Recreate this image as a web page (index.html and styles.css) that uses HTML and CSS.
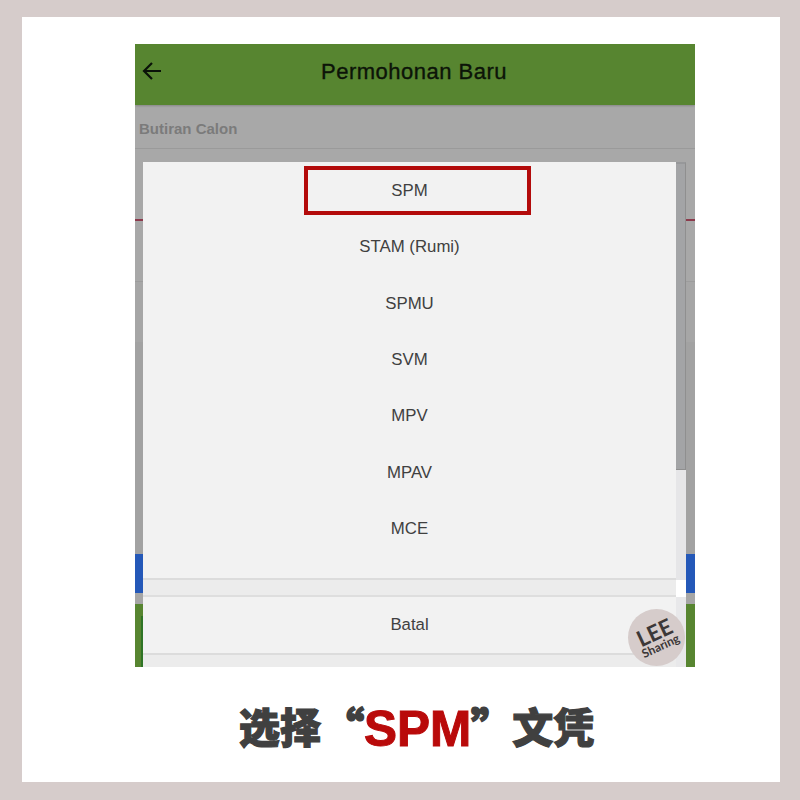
FILE: index.html
```html
<!DOCTYPE html>
<html lang="ms">
<head>
<meta charset="utf-8">
<title>Permohonan Baru</title>
<link rel="stylesheet" href="styles.css">
</head>
<body>
<main class="card">
  <section class="phone">
    <header class="appbar">
      <svg class="back" viewBox="0 0 20 20" width="20" height="20" aria-hidden="true"><path d="M19 10H2M10 2L2 10l8 8" fill="none" stroke="#0a1208" stroke-width="2.2"/></svg>
      <h1 class="apptitle">Permohonan Baru</h1>
    </header>
    <div class="section-head">Butiran Calon</div>
    <div class="under under-a"></div>
    <div class="under under-b"></div>
    <div class="under under-c"></div>
    <div class="under under-d"></div>
    <div class="under-blue"></div>
    <div class="under-gap"></div>
    <div class="under-green"></div>

    <div class="sheet">
      <div class="sheet-main">
        <ul class="options">
          <li class="option option-selected">SPM</li>
          <li class="option">STAM (Rumi)</li>
          <li class="option">SPMU</li>
          <li class="option">SVM</li>
          <li class="option">MPV</li>
          <li class="option">MPAV</li>
          <li class="option">MCE</li>
        </ul>
        <div class="strip"></div>
        <div class="cancel">Batal</div>
        <div class="strip strip-end"></div>
      </div>
      <div class="scrollbar">
        <div class="thumb"></div>
        <div class="track"></div>
        <div class="track-end"></div>
      </div>
    </div>

    <div class="badge">
      <div class="badge-text">
        <span class="badge-lee">LEE</span>
        <span class="badge-sharing">Sharing</span>
      </div>
    </div>
  </section>
  <p class="caption"><span>选择</span><span class="quote quote-l">“</span><span class="spm">SPM</span><span class="quote quote-r">”</span><span>文凭</span></p>
</main>
</body>
</html>
```
FILE: styles.css
```css
* { box-sizing: border-box; }
html, body { margin: 0; padding: 0; }
body {
  width: 800px;
  height: 800px;
  background: #d6cccb;
  padding: 17px 20px 18px 22px;
  font-family: "Liberation Sans", Arial, sans-serif;
  overflow: hidden;
}
.card {
  width: 758px;
  height: 765px;
  background: #fff;
  padding: 27px 85px 0 113px;
  display: flex;
  flex-direction: column;
}
.phone {
  position: relative;
  width: 560px;
  height: 623px;
  overflow: hidden;
  flex: none;
  background: #a3a3a3;
}
.appbar {
  height: 61px;
  background: #578530;
  display: flex;
  align-items: center;
  padding: 0 0 6px 7px;
  box-shadow: 0 1px 2px rgba(0,0,0,.2);
  position: relative;
}
.back { flex: none; margin-top: -2px; }
.apptitle {
  margin: 0 0 0 159px;
  font-size: 22px;
  font-weight: 400;
  letter-spacing: .5px;
  color: #0c1408;
  -webkit-text-stroke: .35px #0c1408;
  white-space: nowrap;
}
.section-head {
  height: 44px;
  background: #a8a8a8;
  border-bottom: 1px solid #9a9a9a;
  padding: 16px 0 0 4px;
  font-size: 15px;
  line-height: 16px;
  font-weight: 700;
  color: #7b7b7b;
}
.under { background: #a8a8a8; }
.under-a { height: 72px; border-bottom: 2px solid #8c3a4c; }
.under-b { height: 61px; border-bottom: 1px solid #9c9c9c; }
.under-c { height: 60px; background: #a6a6a6; }
.under-d { height: 212px; background: #a2a2a2; }
.under-blue { height: 39px; background: #2458b8; }
.under-gap { height: 11px; background: #a6a6a6; }
.under-green {
  height: 64px;
  background: #578530;
  position: relative;
}
.under-green::before {
  content: "";
  position: absolute;
  left: 6px;
  top: 12px;
  bottom: 0;
  width: 2px;
  background: #2f7426;
}

.sheet {
  position: absolute;
  left: 8px;
  top: 118px;
  width: 543px;
  bottom: 0;
  display: flex;
}
.sheet-main {
  width: 533px;
  flex: none;
  display: flex;
  flex-direction: column;
  background: #f2f2f2;
}
.options {
  list-style: none;
  margin: 0;
  padding: 1px 0 0;
  height: 418px;
  flex: none;
  border-bottom: 2px solid #dcdcdc;
}
.option {
  height: 56.3px;
  display: flex;
  align-items: center;
  justify-content: center;
  font-size: 16.8px;
  color: #404040;
  position: relative;
}
.option-selected::after {
  content: "";
  box-sizing: border-box;
  position: absolute;
  left: 161px;
  top: 3px;
  width: 227px;
  height: 49px;
  border: 4px solid #b30b0b;
}
.strip {
  height: 17px;
  flex: none;
  background: #ececec;
  border-bottom: 2px solid #dedede;
}
.cancel {
  height: 58px;
  flex: none;
  display: flex;
  align-items: center;
  justify-content: center;
  font-size: 16.8px;
  color: #404040;
  background: #f2f2f2;
  border-bottom: 2px solid #dcdcdc;
}
.strip-end { flex: 1; height: auto; border-bottom: 0; }
.scrollbar {
  width: 10px;
  flex: none;
  display: flex;
  flex-direction: column;
}
.thumb {
  height: 308px;
  flex: none;
  background: #a3a4a6;
  border-top: 2px solid #97989a;
  border-right: 1px solid #8f8f8f;
  border-bottom: 1px solid #8f8f8f;
}
.track { height: 110px; flex: none; background: #e6e6e8; }
.track-end { flex: 1; background: #e8e8ea; border-top: 17px solid #fff; }

.badge {
  position: absolute;
  left: 493px;
  top: 565px;
  width: 57px;
  height: 57px;
  border-radius: 50%;
  background: #d6cccb;
  color: #3c3838;
  display: flex;
  align-items: center;
  justify-content: center;
}
.badge-text {
  display: flex;
  flex-direction: column;
  align-items: center;
  transform: rotate(-25deg);
  font-family: Lato, sans-serif;
  font-weight: 700;
}
.badge-lee { font-size: 22px; line-height: 18px; }
.badge-sharing { font-size: 12px; line-height: 12px; }

.caption {
  margin: 30px 0 0 104px;
  height: 56px;
  display: flex;
  align-items: center;
  white-space: nowrap;
  font-family: "Noto Sans CJK SC", sans-serif;
  font-size: 41px;
  line-height: 56px;
  font-weight: 900;
  color: #404040;
  -webkit-text-stroke: 1.2px #404040;
}
.spm {
  font-family: "Liberation Sans", Arial, sans-serif;
  font-weight: 700;
  font-size: 49.5px;
  color: #b90a0a;
  -webkit-text-stroke: 1px #b90a0a;
  margin-top: 8px;
}
.quote { flex: none; -webkit-text-stroke: 2px #404040; }
.quote-l { width: 43px; text-align: right; }
.quote-r { width: 41px; text-align: left; }
```
